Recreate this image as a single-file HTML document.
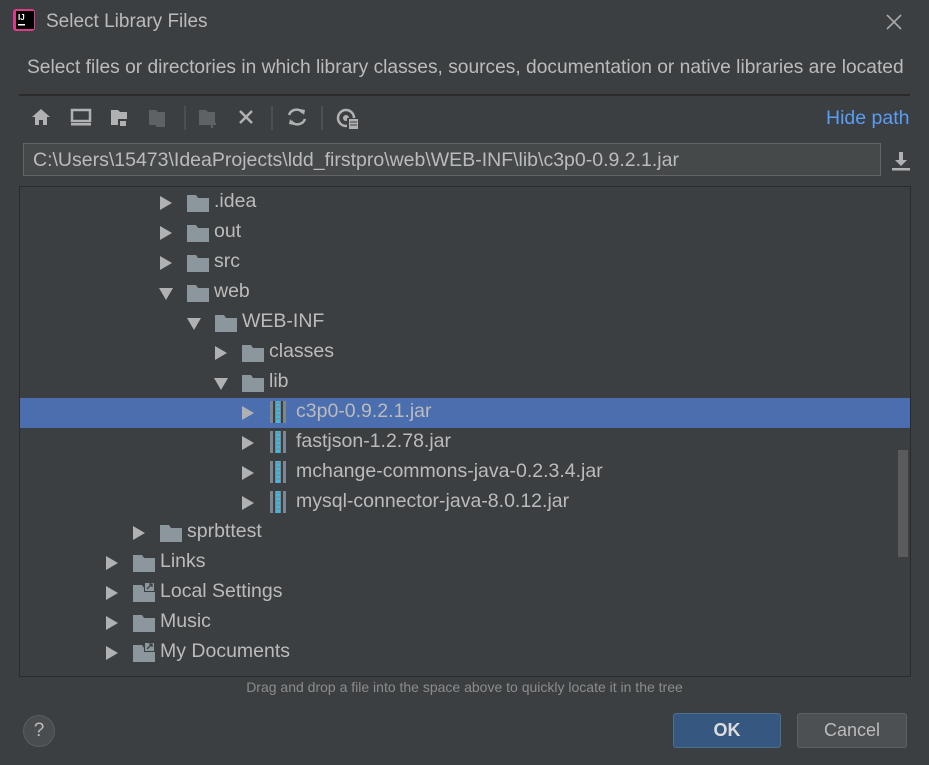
<!DOCTYPE html>
<html><head><style>
body{margin:0;width:929px;height:765px;background:#3c3f41;font-family:"Liberation Sans",sans-serif;color:#bbbbbb;position:relative;overflow:hidden}
.a{position:absolute}
.tri{position:absolute;top:9px;width:0;height:0;border-top:7px solid transparent;border-bottom:7px solid transparent;border-left:12px solid #afb1b3}
.down{position:absolute;top:11px;width:0;height:0;border-left:7px solid transparent;border-right:7px solid transparent;border-top:12px solid #afb1b3}
</style></head><body>
<svg class="a" style="left:12px;top:8px" width="24" height="24"><rect x="1" y="1" width="22" height="22" rx="3" fill="#d93c8b"/><rect x="4" y="3" width="18" height="18" fill="#000"/><text x="6" y="12" font-size="8" font-weight="bold" fill="#fff" font-family="Liberation Sans">IJ</text><rect x="6" y="16" width="7" height="1.5" fill="#fff"/></svg>
<div class="a" style="left:46px;top:11px;font-size:19px;color:#bbb">Select Library Files</div>
<svg class="a" style="left:885px;top:13px" width="18" height="18"><path d="M2 2L16 16M16 2L2 16" stroke="#aaa" stroke-width="1.6"/></svg>
<div class="a" style="left:27px;top:57px;font-size:19.2px;white-space:nowrap">Select files or directories in which library classes, sources, documentation or native libraries are located</div>
<div class="a" style="left:19px;top:94px;width:891px;height:2px;background:#2b2b2b"></div>
<svg class="a" style="left:30px;top:106px" width="340" height="24" fill="#afb1b3">
<path d="M2 11L11 3L20 11H17V19H13V14H9V19H5V11Z"/>
<rect x="42" y="4" width="18" height="11" fill="none" stroke="#afb1b3" stroke-width="2.5"/><rect x="41" y="17" width="20" height="2.5"/>
<path d="M81 4h7l2 2h7v13h-16z"/><rect x="88" y="13" width="9" height="8" fill="#3c3f41"/><rect x="90" y="15" width="6" height="5"/>
<path d="M119 4h7l2 2h7v13h-16z" fill="#5f6264"/><rect x="126" y="13" width="9" height="8" fill="#5f6264"/>
<rect x="154" y="0" width="2" height="26" fill="#4d5052"/>
<path d="M169 4h7l2 2h7v13h-16z" fill="#5f6264"/><path d="M181 14h2v3h3v2h-3v3h-2v-3h-3v-2h3z" fill="#5f6264"/>
<path d="M210 5L222 17M222 5L210 17" stroke="#afb1b3" stroke-width="2.5"/>
<rect x="241" y="0" width="2" height="26" fill="#4d5052"/>
<path d="M259 9a8 8 0 0 1 14 -2M275 13a8 8 0 0 1 -14 2" fill="none" stroke="#afb1b3" stroke-width="2.5"/><path d="M270 3l5 1-1 5z M264 19l-5-1 1-5z"/>
<rect x="291" y="0" width="2" height="26" fill="#4d5052"/>
<circle cx="316" cy="12" r="8" fill="none" stroke="#afb1b3" stroke-width="2.5"/><circle cx="316" cy="12" r="3"/><rect x="317" y="12" width="12" height="12" fill="#3c3f41"/><rect x="319" y="13" width="9" height="10"/><path d="M320 16h7M320 19h7" stroke="#3c3f41"/>
</svg>
<div class="a" style="left:826px;top:107px;font-size:19.5px;color:#589df6">Hide path</div>
<div class="a" style="left:23px;top:143px;width:858px;height:33px;background:#45494a;border:1px solid #646464;box-sizing:border-box"></div>
<div class="a" style="left:33px;top:149px;font-size:19.5px;white-space:nowrap">C:\Users\15473\IdeaProjects\ldd_firstpro\web\WEB-INF\lib\c3p0-0.9.2.1.jar</div>
<svg class="a" style="left:890px;top:150px" width="22" height="22" fill="#afb1b3"><path d="M9 2h4v8h4l-6 6-6-6h4z"/><rect x="2" y="18" width="18" height="2.5"/></svg>
<div class="a" style="left:19px;top:186px;width:890px;height:489px;border:1px solid #2b2b2b;overflow:hidden">
<div class="a" style="left:0;top:211px;height:30px;background:#4b6eaf;width:890px"></div>
<div class="a" style="left:878px;top:263px;width:10px;height:107px;background:#595b5d"></div>
</div>
<svg width="0" height="0" style="position:absolute"><defs>
<symbol id="f" viewBox="0 0 22 17"><path d="M0 0h9l2 3h11v14H0z" fill="#8c979d"/></symbol>
<symbol id="j" viewBox="0 0 16 22"><rect x="0" y="0" width="16" height="22" fill="#7b8890"/><rect x="6" y="0" width="4" height="22" fill="#40b6e0"/><path d="M6 2h4M6 6h4M6 10h4M6 14h4M6 18h4" stroke="#7b8890"/><rect x="3" y="0" width="2" height="22" fill="#3c3f41"/><rect x="11" y="0" width="2" height="22" fill="#3c3f41"/></symbol>
<symbol id="l" viewBox="0 0 22 20"><path d="M0 3h9l2 3h11v14H0z" fill="#8c979d"/><rect x="11" y="0" width="11" height="10" fill="#3c3f41"/><rect x="12" y="1" width="9" height="8" fill="#8c979d"/><path d="M14 7l5-5M16 2h3v3" stroke="#3c3f41" stroke-width="1.3" fill="none"/></symbol>
</defs></svg>
<div id="t"></div>
<script>
var rows=[[160,'r','f','.idea'],[160,'r','f','out'],[160,'r','f','src'],[160,'d','f','web'],[188,'d','f','WEB-INF'],[215,'r','f','classes'],[215,'d','f','lib'],[242,'r','j','c3p0-0.9.2.1.jar'],[242,'r','j','fastjson-1.2.78.jar'],[242,'r','j','mchange-commons-java-0.2.3.4.jar'],[242,'r','j','mysql-connector-java-8.0.12.jar'],[133,'r','f','sprbttest'],[106,'r','f','Links'],[106,'r','l','Local Settings'],[106,'r','f','Music'],[106,'r','l','My Documents']];
var h='';rows.forEach(function(r,i){var y=187+i*30;var x=r[0];
h+='<div class="a" style="left:0;top:'+y+'px;width:929px;height:30px">';
h+=r[1]=='r'?'<div class="tri" style="left:'+x+'px"></div>':'<div class="down" style="left:'+(x-1)+'px"></div>';
if(r[2]=='j')h+='<svg class="a" style="left:'+(x+28)+'px;top:4px" width="16" height="22"><use href="#j"/></svg>';
else if(r[2]=='l')h+='<svg class="a" style="left:'+(x+27)+'px;top:5px" width="22" height="20"><use href="#l"/></svg>';
else h+='<svg class="a" style="left:'+(x+27)+'px;top:8px" width="22" height="17"><use href="#f"/></svg>';
h+='<span class="a" style="left:'+(x+54)+'px;top:3px;font-size:19.5px;white-space:nowrap">'+r[3]+'</span></div>';});
document.getElementById('t').innerHTML=h;
</script>
<div class="a" style="left:0;width:929px;top:679px;text-align:center;font-size:14px;color:#8c8c8c">Drag and drop a file into the space above to quickly locate it in the tree</div>
<div class="a" style="left:23px;top:715px;width:32px;height:32px;border-radius:50%;background:#4a4d4f;border:1px solid #5a5d5f;box-sizing:border-box;text-align:center;line-height:30px;font-size:19px;color:#bbb">?</div>
<div class="a" style="left:673px;top:713px;width:108px;height:35px;background:#365880;border:1px solid #4c708c;box-sizing:border-box;border-radius:3px;text-align:center;line-height:33px;font-size:18px;font-weight:bold;color:#ddd">OK</div>
<div class="a" style="left:797px;top:713px;width:110px;height:35px;background:#4c5052;border:1px solid #5e6060;box-sizing:border-box;border-radius:3px;text-align:center;line-height:33px;font-size:18px;color:#bbb">Cancel</div>
</body></html>
